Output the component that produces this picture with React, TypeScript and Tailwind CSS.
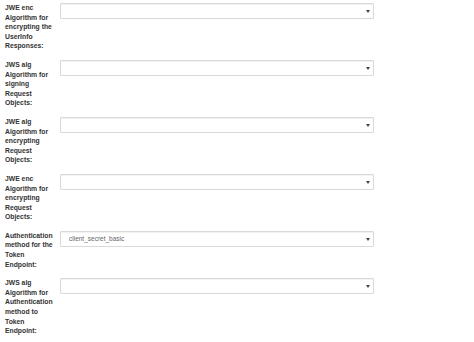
import React from "react";

const rows = [
  { label: "JWE enc Algorithm for encrypting the UserInfo Responses:", value: "" },
  { label: "JWS alg Algorithm for signing Request Objects:", value: "" },
  { label: "JWE alg Algorithm for encrypting Request Objects:", value: "" },
  { label: "JWE enc Algorithm for encrypting Request Objects:", value: "" },
  { label: "Authentication method for the Token Endpoint:", value: "client_secret_basic" },
  { label: "JWS alg Algorithm for Authentication method to Token Endpoint:", value: "" },
];

const SelectBox = ({ value }: { value: string }) => {
  return (
    <div className="relative ml-[5px] flex h-[16px] w-[314px] items-center rounded-[1px] border border-[#d9d9d9] bg-white pl-[8px] shadow-[inset_0_1px_1px_rgba(0,0,0,0.06)]">
      <span className="text-[6.5px] leading-none text-[#666]">{value}</span>
      {/* caret */}
      <svg className="absolute right-[3px] top-[6px]" width="4" height="3" viewBox="0 0 4 3">
        <polygon points="0,0 4,0 2,3" fill="#444" />
      </svg>
    </div>
  );
};

export default function App() {
  return (
    <div
      className="h-[342px] w-[474px] overflow-hidden bg-white pl-[5px] pt-[3px]"
      style={{ fontFamily: '"Liberation Sans", Arial, sans-serif' }}
    >
      {rows.map((row, i) => (
        <div key={i} className="mb-[9px] flex items-start">
          <label className="w-[50px] text-[6.8px] font-bold leading-[9.6px] text-[#333]">{row.label}</label>
          <SelectBox value={row.value} />
        </div>
      ))}
    </div>
  );
}
